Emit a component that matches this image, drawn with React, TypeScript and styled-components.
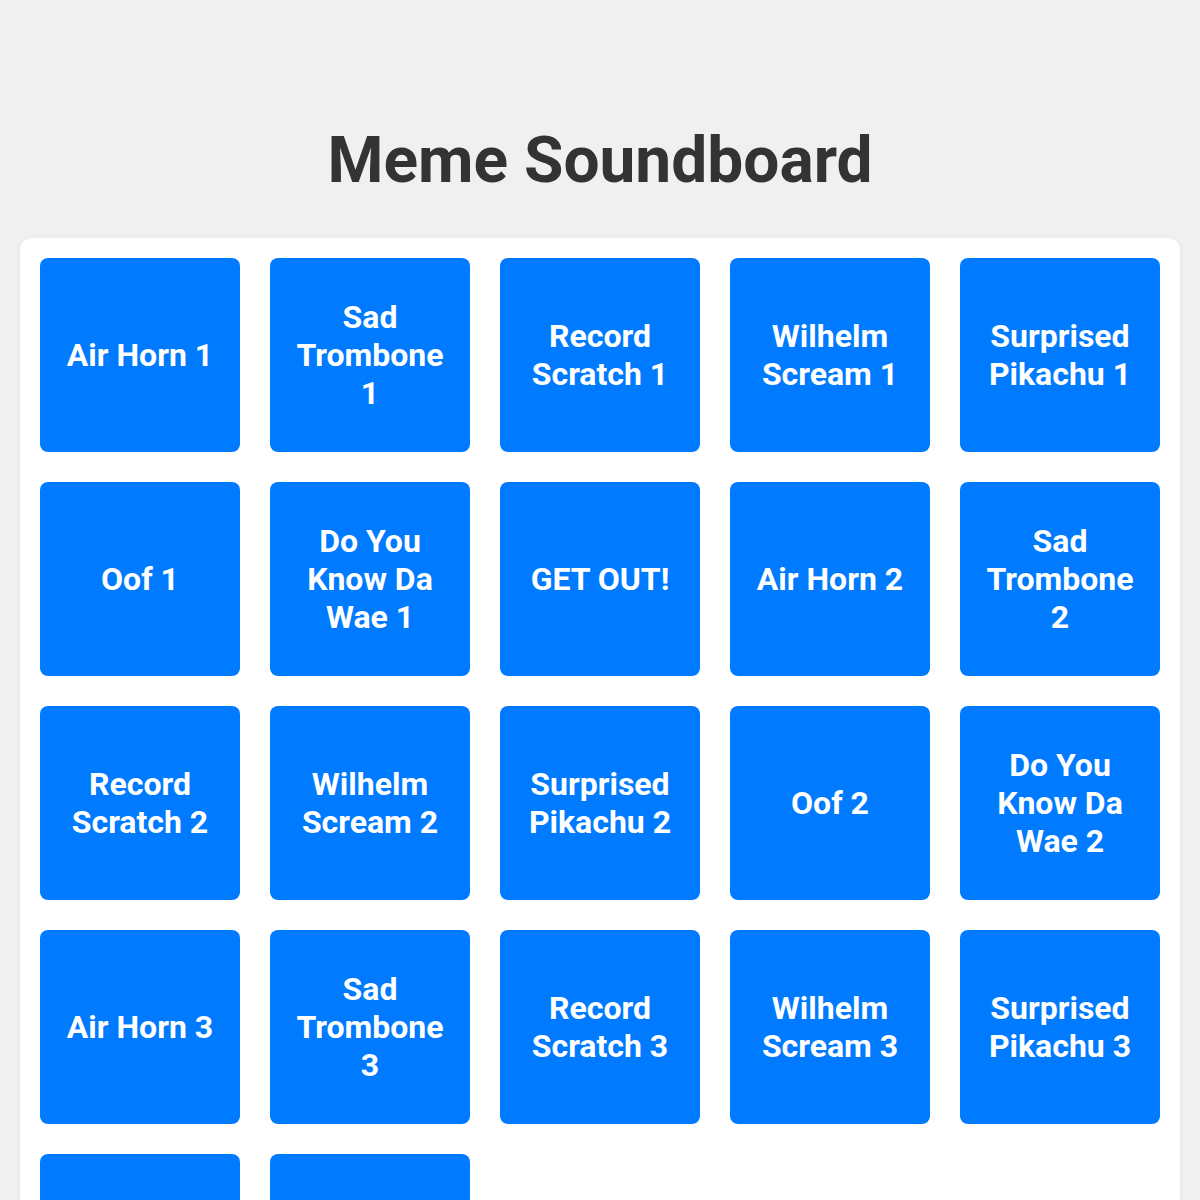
import styled, { createGlobalStyle } from "styled-components";

const GlobalStyle = createGlobalStyle`
  body {
    margin: 0;
    padding: 20px;
    background: #f0f0f0;
    font-family: Roboto, "Liberation Sans", Arial, sans-serif;
  }
`;

const Title = styled.h1`
  margin: 103px 0 40px;
  text-align: center;
  font-size: 64px;
  line-height: 75px;
  font-weight: 700;
  color: #333;
`;

const Board = styled.div`
  display: grid;
  grid-template-columns: repeat(5, 200px);
  grid-auto-rows: 194px;
  gap: 30px;
  padding: 20px;
  background: #fff;
  border-radius: 12px;
  box-shadow: 0 2px 6px rgba(0, 0, 0, 0.06);
`;

const SoundButton = styled.button`
  display: flex;
  align-items: center;
  justify-content: center;
  padding: 2px 20px 0;
  border: none;
  border-radius: 8px;
  background: #007bff;
  color: #fff;
  font-family: inherit;
  font-size: 32px;
  font-weight: 700;
  line-height: 1.18;
  text-align: center;
  cursor: pointer;

  &:hover {
    background: #0069d9;
  }
`;

const names = [
  "Air Horn",
  "Sad Trombone",
  "Record Scratch",
  "Wilhelm Scream",
  "Surprised Pikachu",
  "Oof",
  "Do You Know Da Wae",
];

// three rounds of the base sounds, with GET OUT! after the first Da Wae
const sounds: string[] = [];
for (let round = 1; round <= 3; round++) {
  names.forEach((n) => {
    sounds.push(`${n} ${round}`);
    if (round === 1 && n === "Do You Know Da Wae") sounds.push("GET OUT!");
  });
}

export default function App() {
  return (
    <>
      <GlobalStyle />
      <Title>Meme Soundboard</Title>
      <Board>
        {sounds.map((s) => (
          <SoundButton key={s}>{s}</SoundButton>
        ))}
      </Board>
    </>
  );
}
